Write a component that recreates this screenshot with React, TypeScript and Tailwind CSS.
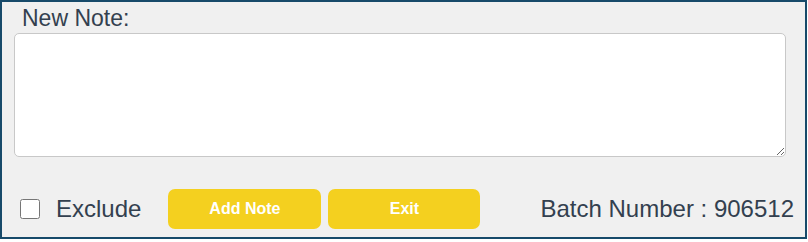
import { useState } from "react";

export default function App() {
  const [note, setNote] = useState("");
  const [exclude, setExclude] = useState(false);

  return (
    <div className="h-[242px] w-[808px] bg-white font-['Liberation_Sans',Arial,sans-serif]">
      <div className="flex h-[239px] w-[807px] flex-col border-2 border-[#174a6a] bg-[#f0f0f0]">
        <label className="ml-[20px] mt-[3px] text-[23px] leading-[26px] text-[#33404f]">New Note:</label>
        <textarea
          value={note}
          onChange={(e) => setNote(e.target.value)}
          className="ml-[12px] mt-[2px] h-[124px] w-[772px] resize rounded-[5px] border border-[#c8c8c8] bg-white px-2 py-1 text-sm outline-none"
        />
        <div className="mt-[32px] flex items-center">
          <label className="ml-[18px] flex items-center">
            <input
              type="checkbox"
              checked={exclude}
              onChange={(e) => setExclude(e.target.checked)}
              className="h-[20px] w-[20px] accent-[#555]"
            />
            <span className="ml-[16px] text-[24px] text-[#33404f]">Exclude</span>
          </label>
          <button className="ml-[27px] h-[40px] w-[153px] rounded-[7px] bg-[#f4d01f] text-[16px] font-bold text-white">
            Add Note
          </button>
          <button className="ml-[7px] h-[40px] w-[152px] rounded-[7px] bg-[#f4d01f] text-[16px] font-bold text-white">
            Exit
          </button>
          <span className="ml-auto mr-[11px] text-[24px] text-[#33404f]">Batch Number : 906512</span>
        </div>
      </div>
    </div>
  );
}
